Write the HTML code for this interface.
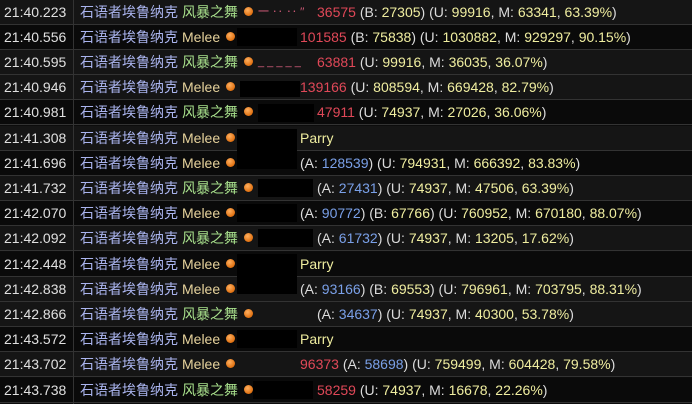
<!DOCTYPE html>
<html><head><meta charset="utf-8"><style>
body{margin:0;width:692px;height:404px;background:#0c0c0c;overflow:hidden;font-family:"Liberation Sans","Noto Sans CJK SC",sans-serif;font-size:14px;}
.r{position:absolute;left:0;width:692px;height:24px;border-bottom:1px solid #333;}
.r.g{background:#151515}.r.b{background:#0a0a0a}
.r span,.r i,.r b{position:absolute;top:4px;white-space:nowrap;font-style:normal;font-weight:normal;line-height:16px}
.t{left:4px;color:#e0e0e0}
.n{left:80px;color:#aab4ee}
.w{left:182px;color:#a8e08c}
.m{left:182px;color:#e6d29c}
.o{width:9px;height:9px;border-radius:50%;background:radial-gradient(circle at 40% 35%,#ffb060,#e07010 70%);top:7px!important}
.rest{color:#dcdcdc}
.red{color:#e04858}.y{color:#f0eea0}.bl{color:#7aa0e8}.pk{color:#e06080}
.box{position:absolute;background:#000}
.vl{position:absolute;left:73px;top:0;width:1px;height:404px;background:#333}
</style></head><body>
<div class="r g" style="top:0"><span class="t">21:40.223</span><span class="n">石语者埃鲁纳克</span><span class="w">风暴之舞</span><i class="o" style="left:244px"></i><span class="pk" style="left:258px;font-size:11px">一 ‥ ‥ ′′</span><span class="rest" style="left:317px"><span class="red" style="position:static">36575</span> (B: <span class="y" style="position:static">27305</span>) (U: <span class="y" style="position:static">99916</span>, M: <span class="y" style="position:static">63341</span>, <span class="y" style="position:static">63.39%</span>)</span></div>
<div class="r b" style="top:25px"><span class="t">21:40.556</span><span class="n">石语者埃鲁纳克</span><span class="m">Melee</span><i class="o" style="left:226px"></i><span class="rest" style="left:300px"><span class="red" style="position:static">101585</span> (B: <span class="y" style="position:static">75838</span>) (U: <span class="y" style="position:static">1030882</span>, M: <span class="y" style="position:static">929297</span>, <span class="y" style="position:static">90.15%</span>)</span></div>
<div class="r g" style="top:50px"><span class="t">21:40.595</span><span class="n">石语者埃鲁纳克</span><span class="w">风暴之舞</span><i class="o" style="left:244px"></i><span class="pk" style="left:258px;font-size:11px">_ _ _ _ _</span><span class="rest" style="left:317px"><span class="red" style="position:static">63881</span> (U: <span class="y" style="position:static">99916</span>, M: <span class="y" style="position:static">36035</span>, <span class="y" style="position:static">36.07%</span>)</span></div>
<div class="r g" style="top:75px"><span class="t">21:40.946</span><span class="n">石语者埃鲁纳克</span><span class="m">Melee</span><i class="o" style="left:226px"></i><span class="rest" style="left:300px"><span class="red" style="position:static">139166</span> (U: <span class="y" style="position:static">808594</span>, M: <span class="y" style="position:static">669428</span>, <span class="y" style="position:static">82.79%</span>)</span></div>
<div class="r b" style="top:100px"><span class="t">21:40.981</span><span class="n">石语者埃鲁纳克</span><span class="w">风暴之舞</span><i class="o" style="left:244px"></i><span class="rest" style="left:317px"><span class="red" style="position:static">47911</span> (U: <span class="y" style="position:static">74937</span>, M: <span class="y" style="position:static">27026</span>, <span class="y" style="position:static">36.06%</span>)</span></div>
<div class="r g" style="top:126px"><span class="t">21:41.308</span><span class="n">石语者埃鲁纳克</span><span class="m">Melee</span><i class="o" style="left:226px"></i><span class="y" style="left:300px">Parry</span></div>
<div class="r b" style="top:151px"><span class="t">21:41.696</span><span class="n">石语者埃鲁纳克</span><span class="m">Melee</span><i class="o" style="left:226px"></i><span class="rest" style="left:300px">(A: <span class="bl" style="position:static">128539</span>) (U: <span class="y" style="position:static">794931</span>, M: <span class="y" style="position:static">666392</span>, <span class="y" style="position:static">83.83%</span>)</span></div>
<div class="r g" style="top:176px"><span class="t">21:41.732</span><span class="n">石语者埃鲁纳克</span><span class="w">风暴之舞</span><i class="o" style="left:244px"></i><span class="rest" style="left:317px">(A: <span class="bl" style="position:static">27431</span>) (U: <span class="y" style="position:static">74937</span>, M: <span class="y" style="position:static">47506</span>, <span class="y" style="position:static">63.39%</span>)</span></div>
<div class="r b" style="top:201px"><span class="t">21:42.070</span><span class="n">石语者埃鲁纳克</span><span class="m">Melee</span><i class="o" style="left:226px"></i><span class="rest" style="left:300px">(A: <span class="bl" style="position:static">90772</span>) (B: <span class="y" style="position:static">67766</span>) (U: <span class="y" style="position:static">760952</span>, M: <span class="y" style="position:static">670180</span>, <span class="y" style="position:static">88.07%</span>)</span></div>
<div class="r g" style="top:226px"><span class="t">21:42.092</span><span class="n">石语者埃鲁纳克</span><span class="w">风暴之舞</span><i class="o" style="left:244px"></i><span class="rest" style="left:317px">(A: <span class="bl" style="position:static">61732</span>) (U: <span class="y" style="position:static">74937</span>, M: <span class="y" style="position:static">13205</span>, <span class="y" style="position:static">17.62%</span>)</span></div>
<div class="r b" style="top:252px"><span class="t">21:42.448</span><span class="n">石语者埃鲁纳克</span><span class="m">Melee</span><i class="o" style="left:226px"></i><span class="y" style="left:300px">Parry</span></div>
<div class="r g" style="top:277px"><span class="t">21:42.838</span><span class="n">石语者埃鲁纳克</span><span class="m">Melee</span><i class="o" style="left:226px"></i><span class="rest" style="left:300px">(A: <span class="bl" style="position:static">93166</span>) (B: <span class="y" style="position:static">69553</span>) (U: <span class="y" style="position:static">796961</span>, M: <span class="y" style="position:static">703795</span>, <span class="y" style="position:static">88.31%</span>)</span></div>
<div class="r g" style="top:302px"><span class="t">21:42.866</span><span class="n">石语者埃鲁纳克</span><span class="w">风暴之舞</span><i class="o" style="left:244px"></i><span class="rest" style="left:317px">(A: <span class="bl" style="position:static">34637</span>) (U: <span class="y" style="position:static">74937</span>, M: <span class="y" style="position:static">40300</span>, <span class="y" style="position:static">53.78%</span>)</span></div>
<div class="r b" style="top:327px"><span class="t">21:43.572</span><span class="n">石语者埃鲁纳克</span><span class="m">Melee</span><i class="o" style="left:226px"></i><span class="y" style="left:300px">Parry</span></div>
<div class="r g" style="top:352px"><span class="t">21:43.702</span><span class="n">石语者埃鲁纳克</span><span class="m">Melee</span><i class="o" style="left:226px"></i><span class="rest" style="left:300px"><span class="red" style="position:static">96373</span> (A: <span class="bl" style="position:static">58698</span>) (U: <span class="y" style="position:static">759499</span>, M: <span class="y" style="position:static">604428</span>, <span class="y" style="position:static">79.58%</span>)</span></div>
<div class="r b" style="top:378px"><span class="t">21:43.738</span><span class="n">石语者埃鲁纳克</span><span class="w">风暴之舞</span><i class="o" style="left:244px"></i><span class="rest" style="left:317px"><span class="red" style="position:static">58259</span> (U: <span class="y" style="position:static">74937</span>, M: <span class="y" style="position:static">16678</span>, <span class="y" style="position:static">22.26%</span>)</span></div>
<div class="box" style="left:237px;top:28px;width:60px;height:18px"></div>
<div class="box" style="left:240px;top:81px;width:60px;height:16px"></div>
<div class="box" style="left:258px;top:104px;width:56px;height:18px"></div>
<div class="box" style="left:237px;top:129px;width:60px;height:40px"></div>
<div class="box" style="left:258px;top:179px;width:55px;height:18px"></div>
<div class="box" style="left:237px;top:204px;width:60px;height:18px"></div>
<div class="box" style="left:258px;top:229px;width:55px;height:18px"></div>
<div class="box" style="left:237px;top:254px;width:60px;height:40px"></div>
<div class="box" style="left:237px;top:330px;width:60px;height:18px"></div>
<div class="box" style="left:253px;top:381px;width:60px;height:18px"></div>
<div class="vl"></div>
</body></html>
